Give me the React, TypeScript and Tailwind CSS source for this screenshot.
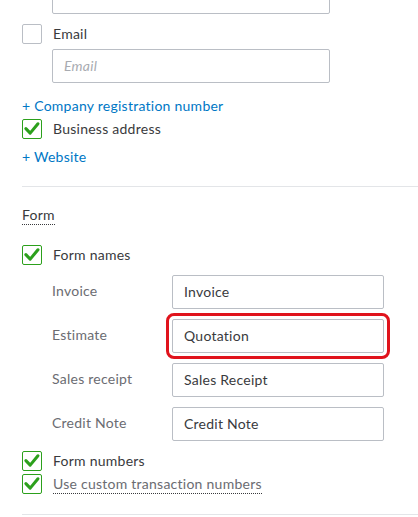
import React from "react";

const Check = ({ checked }: { checked: boolean }) => (
  <span
    className={`flex h-5 w-5 shrink-0 items-center justify-center rounded-[2px] border bg-white ${
      checked ? "border-[#2ca01c]" : "border-[#babec5]"
    }`}
  >
    {checked && (
      <svg viewBox="0 0 20 20" className="h-[18px] w-[18px]">
        <path
          d="M3.2 9.6 L8 14.6 L16.6 4.2"
          fill="none"
          stroke="#2ca01c"
          strokeWidth="3.4"
          strokeLinecap="round"
          strokeLinejoin="round"
        />
      </svg>
    )}
  </span>
);

const Field = ({
  value,
  placeholder,
  className = "",
}: {
  value?: string;
  placeholder?: string;
  className?: string;
}) => (
  <div
    className={`flex h-[34px] items-center rounded-[2px] border border-[#babec5] bg-white px-[11px] ${className}`}
  >
    {value ? (
      <span className="text-[#393a3d]">{value}</span>
    ) : (
      <span className="italic text-[#a8abb1]">{placeholder}</span>
    )}
  </div>
);

const CheckRow = ({ children, className = "" }: { children: React.ReactNode; className?: string }) => (
  <div className={`flex h-5 items-center gap-[11px] ${className}`}>
    <Check checked />
    {children}
  </div>
);

const names = [
  { label: "Invoice", value: "Invoice" },
  { label: "Estimate", value: "Quotation", highlight: true },
  { label: "Sales receipt", value: "Sales Receipt" },
  { label: "Credit Note", value: "Credit Note" },
];

export default function App() {
  return (
    <div
      className="h-[517px] w-[418px] overflow-hidden bg-white pl-[22px] text-[14px] leading-5 tracking-[0.25px] text-[#393a3d]"
      style={{ fontFamily: 'Lato, "Liberation Sans", sans-serif' }}
    >
      {/* cut-off field from the section above */}
      <Field value=" " className="ml-[30px] -mt-[20px] w-[278px]" />

      <div className="mt-[10px] flex h-5 items-center gap-[11px]">
        <Check checked={false} />
        <span>Email</span>
      </div>
      <Field placeholder="Email" className="ml-[30px] mt-[5px] w-[278px]" />

      <div className="mt-[13px] text-[#0077c5]">+ Company registration number</div>
      <CheckRow className="mt-[3px]">
        <span>Business address</span>
      </CheckRow>
      <div className="mt-[8px] text-[#0077c5]">+ Website</div>

      <div className="mt-[19px] h-px bg-[#e3e5e8]" />

      <div className="mt-[18px]">
        <span className="border-b border-dotted border-[#393a3d] pb-[1px]">Form</span>
      </div>

      <CheckRow className="mt-[20px]">
        <span>Form names</span>
      </CheckRow>

      <div className="mt-[10px] flex flex-col gap-[10px] pl-[30px]">
        {names.map((n) => (
          <div key={n.label} className="flex items-center">
            <span className="w-[120px] pb-[3px] text-[#6b6c72]">{n.label}</span>
            <Field
              value={n.value}
              className={`w-[212px] ${
                n.highlight ? "outline-[3px] outline-offset-[3px] outline-solid outline-[#e0131c]" : ""
              }`}
            />
          </div>
        ))}
      </div>

      <CheckRow className="mt-[10px]">
        <span>Form numbers</span>
      </CheckRow>
      <CheckRow className="mt-[3px]">
        <span className="border-b border-dotted border-[#393a3d] leading-[18px] text-[#6b6c72]">
          Use custom transaction numbers
        </span>
      </CheckRow>

      <div className="mt-[20px] h-px bg-[#e3e5e8]" />
    </div>
  );
}
